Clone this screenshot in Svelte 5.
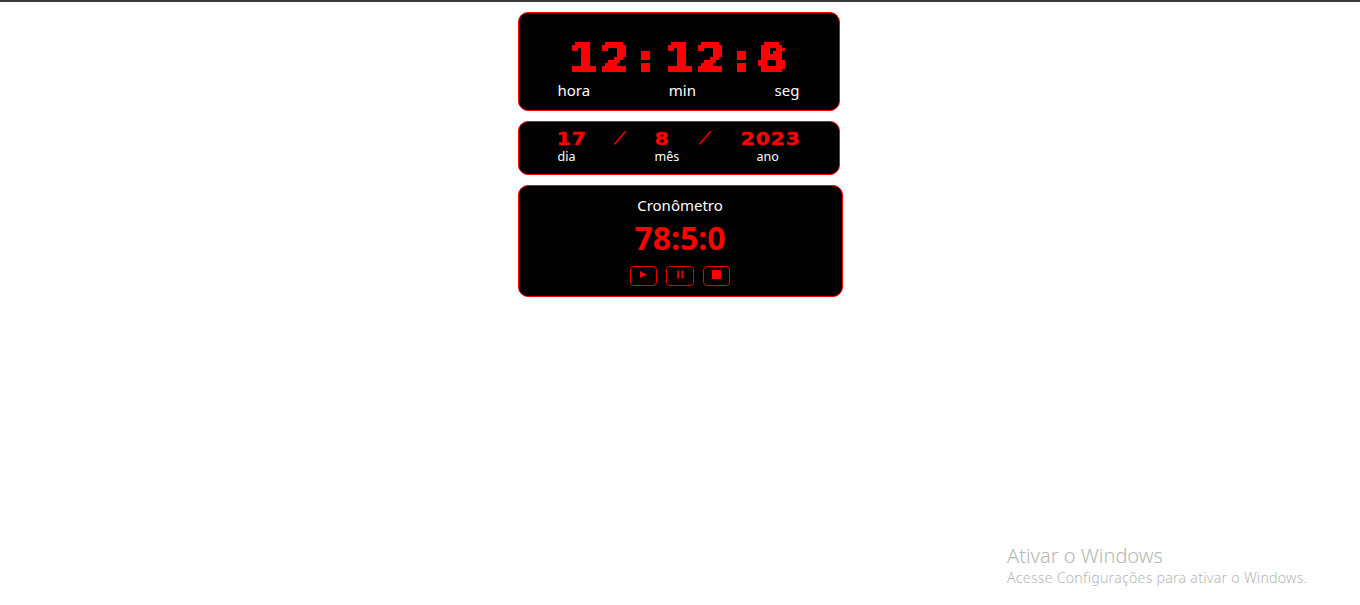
<script>
  const time = [
    { value: '12', sep: ':', label: 'hora' },
    { value: '12', sep: ':', label: 'min' },
    { value: '8', sep: '', label: 'seg' }
  ];
  const date = [
    { value: '17', label: 'dia', cls: 'd1' },
    { value: '8', label: 'mês', cls: 'd2' },
    { value: '2023', label: 'ano', cls: 'd3' }
  ];
</script>

<svg class="defs" width="0" height="0" aria-hidden="true">
  <filter id="px3" x="0" y="0" width="100%" height="100%">
    <feFlood x="1" y="1" width="1" height="1" flood-color="#f00"/>
    <feComposite width="3" height="3"/>
    <feTile result="grid"/>
    <feComposite in="SourceGraphic" in2="grid" operator="in"/>
    <feMorphology operator="dilate" radius="1"/>
    <feComponentTransfer>
      <feFuncA type="discrete" tableValues="0 1 1"/>
    </feComponentTransfer>
  </filter>
</svg>

<div class="topline"></div>
<main class="column">
  <section class="card clock">
    <div class="digits">
      {#each time as t}
        <span class="group"><span class="value">{t.value}</span>{#if t.sep}<span class="colon">{t.sep}</span>{/if}</span>
      {/each}
    </div>
    <div class="labels">
      {#each time as t}<span>{t.label}</span>{/each}
    </div>
  </section>

  <section class="card calendar">
    <div class="dates">
      {#each date as d, i}
        <div class="cell {d.cls}">
          <span class="num">{d.value}</span>
          <span class="small">{d.label}</span>
        </div>
        {#if i < 2}<span class="slash">/</span>{/if}
      {/each}
    </div>
  </section>

  <section class="card watch">
    <h2>Cronômetro</h2>
    <div class="elapsed">78:5:0</div>
    <div class="buttons">
      <button aria-label="Iniciar"><svg width="9" height="9" viewBox="0 0 9 9"><path d="M1 1l7 3.5L1 8z" fill="#f00"/></svg></button>
      <button class="wide" aria-label="Pausar"><svg width="9" height="9" viewBox="0 0 9 9"><path d="M1 0.5h2.4v8H1zM5.4 0.5h2.4v8H5.4z" fill="#c00"/></svg></button>
      <button aria-label="Parar"><svg width="9" height="9" viewBox="0 0 9 9"><rect width="9" height="9" fill="#f00"/></svg></button>
    </div>
  </section>
</main>

<aside class="activate">
  <div class="a1">Ativar o Windows</div>
  <div class="a2">Acesse Configurações para ativar o Windows.</div>
</aside>

<style>
  :global(body) {
    margin: 0;
    background: #fff;
    font-family: "Noto Sans", "Open Sans", sans-serif;
    height: 605px;
    overflow: hidden;
  }
  .defs {
    position: absolute;
  }
  .topline {
    height: 2px;
    background: #3c3c3c;
  }
  .column {
    width: 325px;
    margin: 10px auto 0;
    display: flex;
    flex-direction: column;
    align-items: flex-start;
    gap: 10px;
  }
  .card {
    box-sizing: border-box;
    width: 322px;
    background: #000;
    border: 1px solid #f00;
    border-radius: 10px;
    color: #fff;
  }
  .clock {
    height: 99px;
    padding: 23px 39px 0;
  }
  .digits {
    display: flex;
    margin-left: 11px;
    width: 232px;
    font: 700 39px/46px "DejaVu Sans", sans-serif;
    letter-spacing: 2px;
    color: #f00;
    -webkit-text-stroke: 1px #f00;
    filter: url(#px3);
  }
  .group {
    flex: none;
    width: 96px;
    display: flex;
  }
  .group:last-child {
    width: 40px;
    margin-left: -4px;
  }
  .value {
    transform: scaleX(1.09);
    transform-origin: left center;
  }
  .colon {
    margin-left: 10px;
  }
  .labels {
    display: flex;
    justify-content: space-between;
    font-size: 15px;
    line-height: 20px;
    margin-top: -2px;
  }
  .calendar {
    height: 54px;
    padding: 6px 0 0 38px;
  }
  .dates {
    display: flex;
    align-items: flex-start;
  }
  .cell {
    flex: none;
    display: flex;
    flex-direction: column;
    align-items: flex-start;
  }
  .num {
    font: 700 17px/22px "DejaVu Sans", sans-serif;
    letter-spacing: 0.7px;
    color: #f00;
    -webkit-text-stroke: 0.5px #f00;
    transform: scaleX(1.2);
    transform-origin: left center;
  }
  .small {
    font-size: 12.5px;
    line-height: 14px;
    margin-left: 1px;
  }
  .d1 { width: 56px; }
  .d2 { width: 43px; margin-left: 28px; }
  .d2 .small { margin-left: 0; }
  .d3 { margin-left: 29px; width: 60px; }
  .d3 .small { margin-left: 16px; }
  .slash {
    flex: none;
    font: 400 17px/22px "Liberation Sans", sans-serif;
    color: #f00;
    -webkit-text-stroke: 0.4px #f00;
    width: 14px;
    text-align: center;
    transform: translateX(-1px) skewX(-30deg);
  }
  .watch {
    width: 325px;
    height: 112px;
    display: flex;
    flex-direction: column;
    align-items: center;
    padding-top: 9px;
  }
  h2 {
    margin: 0;
    font-size: 15px;
    font-weight: 400;
    line-height: 20px;
  }
  .elapsed {
    color: #f00;
    font-size: 32px;
    font-weight: 700;
    line-height: 40px;
    margin-top: 3px;
  }
  .buttons {
    display: flex;
    gap: 9px;
    margin-top: 8px;
  }
  button {
    box-sizing: border-box;
    width: 27px;
    height: 20px;
    padding: 0 0 3px;
    background: #000;
    border: 1px solid #e00;
    border-radius: 4px;
    display: flex;
    align-items: center;
    justify-content: center;
  }
  button svg {
    flex: none;
    display: block;
  }
  button.wide {
    width: 28px;
  }
  .activate {
    position: absolute;
    left: 1007px;
    top: 543px;
    color: #b6b6b6;
  }
  .a1 {
    font-size: 20px;
    font-weight: 300;
    line-height: 25px;
  }
  .a2 {
    font-size: 14.1px;
    font-weight: 300;
    letter-spacing: 0.28px;
    line-height: 19px;
  }
</style>
